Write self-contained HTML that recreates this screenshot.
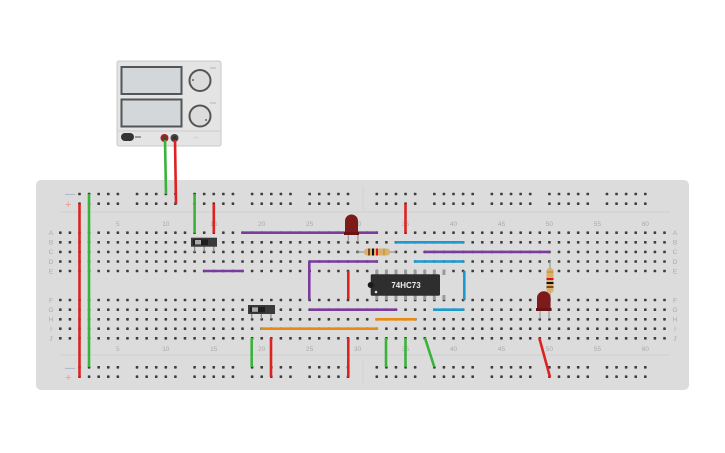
<!DOCTYPE html>
<html><head><meta charset="utf-8"><style>
html,body{margin:0;padding:0;background:#fff;width:725px;height:453px;overflow:hidden}
svg{display:block}
text{font-family:"Liberation Sans",sans-serif}
</style></head><body>
<svg id="s" width="725" height="453" viewBox="0 0 725 453" xmlns="http://www.w3.org/2000/svg">
<!-- power supply -->
<rect x="117" y="61" width="104" height="85" rx="2" fill="#e4e4e4" stroke="#c8c8c8"/>
<rect x="121.5" y="67" width="60" height="27" fill="#d3d7d9" stroke="#555" stroke-width="2"/>
<rect x="121.5" y="99.5" width="60" height="27" fill="#d3d7d9" stroke="#555" stroke-width="2"/>
<circle cx="200" cy="80.5" r="10.5" fill="#dcdcdc" stroke="#555" stroke-width="2"/>
<circle cx="200" cy="116" r="10.5" fill="#dcdcdc" stroke="#555" stroke-width="2"/>
<circle cx="193" cy="80" r="0.9" fill="#444"/><circle cx="206" cy="120" r="0.9" fill="#444"/>
<text x="210" y="69" font-size="3" fill="#999">0.5C</text><text x="210" y="104" font-size="3" fill="#999">0.5C</text>
<line x1="117" y1="131" x2="221" y2="131" stroke="#ccc"/>
<rect x="121" y="133" width="13" height="8" rx="4" fill="#333"/>
<rect x="135" y="136" width="6" height="2" fill="#999"/>
<circle cx="164.5" cy="138" r="4" fill="#b01c1c"/><circle cx="164.5" cy="138" r="2" fill="#444"/>
<circle cx="174.5" cy="138" r="4" fill="#444"/><circle cx="174.5" cy="138" r="2" fill="#333"/>
<text x="194" y="139" font-size="4" fill="#ccc">Pb</text>
<!-- board -->
<rect x="36" y="180" width="653" height="210" rx="5" fill="#dcdcdc"/>
<line x1="60" y1="212" x2="670" y2="212" stroke="#d0d0d0"/>
<line x1="60" y1="355" x2="670" y2="355" stroke="#d0d0d0"/>
<line x1="363" y1="186" x2="363" y2="210" stroke="#d2d2d2"/>
<line x1="363" y1="359" x2="363" y2="384" stroke="#d2d2d2"/>
<text x="65" y="197" font-size="10" fill="#9ab">—</text>
<text x="65" y="208" font-size="11" fill="#e99">+</text>
<text x="65" y="371" font-size="10" fill="#9ab">—</text>
<text x="65" y="381" font-size="11" fill="#e99">+</text>
<g id="holes" fill="#3c3c3c"></g>
<g id="labels" font-size="6.5" fill="#aaa"></g>
<!-- wires -->
<g stroke-width="2.6" stroke-linecap="butt" fill="none">
<line x1="165" y1="140" x2="166" y2="194" stroke="#3bb33b"/>
<line x1="175" y1="140" x2="176" y2="204" stroke="#dd2222"/>
<line x1="79.5" y1="204" x2="79.5" y2="377" stroke="#dd2222"/>
<line x1="89" y1="194" x2="89" y2="367" stroke="#3bb33b"/>
<line x1="194.6" y1="194" x2="194.6" y2="233" stroke="#3bb33b"/>
<line x1="213.8" y1="204" x2="213.8" y2="233" stroke="#dd2222"/>
<line x1="242" y1="232.7" x2="378" y2="232.7" stroke="#7b3a9e"/>
<line x1="203.3" y1="271" x2="243.3" y2="271" stroke="#7b3a9e"/>
<line x1="309.3" y1="261.5" x2="309.3" y2="300" stroke="#7b3a9e"/>
<line x1="309.3" y1="261.5" x2="378" y2="261.5" stroke="#7b3a9e"/>
<line x1="309.3" y1="309.7" x2="397" y2="309.7" stroke="#7b3a9e"/>
<line x1="261" y1="328.7" x2="378" y2="328.7" stroke="#e88a10"/>
<line x1="375.7" y1="319.3" x2="416" y2="319.3" stroke="#e88a10"/>
<line x1="251.7" y1="338" x2="251.7" y2="367" stroke="#3bb33b"/>
<line x1="271" y1="338" x2="271" y2="377" stroke="#dd2222"/>
<line x1="348.3" y1="271" x2="348.3" y2="299" stroke="#dd2222"/>
<line x1="348.3" y1="338" x2="348.3" y2="377" stroke="#dd2222"/>
<line x1="405.5" y1="204" x2="405.5" y2="233" stroke="#dd2222"/>
<line x1="395.3" y1="242.3" x2="464.3" y2="242.3" stroke="#1a9ad0"/>
<line x1="424" y1="251.9" x2="550" y2="251.9" stroke="#7b3a9e"/>
<line x1="414" y1="261.5" x2="464.3" y2="261.5" stroke="#1a9ad0"/>
<line x1="464.3" y1="271" x2="464.3" y2="300" stroke="#1a9ad0"/>
<line x1="433" y1="309.7" x2="464.3" y2="309.7" stroke="#1a9ad0"/>
<line x1="386" y1="338" x2="386" y2="367" stroke="#3bb33b"/>
<line x1="405.5" y1="338" x2="405.5" y2="367" stroke="#3bb33b"/>
<line x1="425" y1="338" x2="434.3" y2="367" stroke="#3bb33b"/>
<line x1="539.3" y1="338" x2="550" y2="377" stroke="#dd2222"/>
</g>
<!-- switches -->
<g stroke="#888" stroke-width="1.2">
<line x1="194.6" y1="246" x2="194.6" y2="252"/><line x1="204.2" y1="246" x2="204.2" y2="252"/><line x1="213.8" y1="246" x2="213.8" y2="252"/>
<line x1="251.7" y1="313" x2="251.7" y2="319"/><line x1="261.3" y1="313" x2="261.3" y2="319"/><line x1="270.9" y1="313" x2="270.9" y2="319"/>
</g>
<rect x="191" y="237.7" width="26" height="9" fill="#3a3a3a"/><rect x="193" y="239.5" width="15" height="5.5" fill="#1e1e1e"/><rect x="195" y="240" width="6" height="4.5" fill="#aaa"/>
<rect x="248" y="305" width="27" height="9" fill="#3a3a3a"/><rect x="250" y="306.8" width="15" height="5.5" fill="#1e1e1e"/><rect x="252" y="307.3" width="6" height="4.5" fill="#aaa"/>
<!-- LED1 -->
<g stroke="#999" stroke-width="1.2"><line x1="348.3" y1="233" x2="348.3" y2="242"/><line x1="357.9" y1="233" x2="357.9" y2="242"/></g>
<path d="M345 235 V221 a6.5 6.5 0 0 1 13 0 V235 Z" fill="#7d1a1a"/><rect x="344" y="232" width="15" height="3" fill="#6a1515"/>
<!-- resistor1 -->
<line x1="357" y1="252" x2="396" y2="252" stroke="#999" stroke-width="1.2"/>
<rect x="364" y="248.5" width="26" height="7" rx="3" fill="#d8b070"/>
<rect x="368" y="248.5" width="2" height="7" fill="#7a4a1a"/><rect x="372" y="248.5" width="2" height="7" fill="#111"/><rect x="376" y="248.5" width="2" height="7" fill="#e01010"/><rect x="383" y="248.5" width="2" height="7" fill="#c9a040"/>
<!-- IC -->
<g id="pins" fill="#999"></g>
<rect x="370.7" y="274.3" width="69.3" height="21.4" rx="1.5" fill="#2e2e2e"/>
<circle cx="370.7" cy="285" r="3" fill="#1a1a1a"/>
<circle cx="376" cy="292" r="1.3" fill="#ddd"/>
<text x="406" y="288" font-size="8" font-family="Liberation Mono,monospace" fill="#eee" text-anchor="middle" font-weight="bold">74HC73</text>
<!-- resistor2 -->
<line x1="550" y1="261" x2="550" y2="300" stroke="#999" stroke-width="1.2"/>
<rect x="546.5" y="268" width="7" height="25" rx="3" fill="#d8b070"/>
<rect x="546.5" y="271" width="7" height="2" fill="#c9a040"/><rect x="546.5" y="278" width="7" height="2" fill="#e01010"/><rect x="546.5" y="282" width="7" height="2" fill="#111"/><rect x="546.5" y="286" width="7" height="2" fill="#7a4a1a"/>
<!-- LED2 -->
<g stroke="#999" stroke-width="1.2"><line x1="540" y1="310" x2="540" y2="319"/><line x1="549" y1="310" x2="549" y2="319"/></g>
<path d="M537 311 V298 a6.8 6.8 0 0 1 13.6 0 V311 Z" fill="#7d1a1a"/><rect x="536" y="308" width="15.6" height="3" fill="#6a1515"/>
</svg>
<script>
var NS="http://www.w3.org/2000/svg",h=document.getElementById("holes"),L=document.getElementById("labels"),P=document.getElementById("pins");
function X(c){return 79.5+(c-1)*9.59}
function dot(x,y){var r=document.createElementNS(NS,"rect");r.setAttribute("x",x-1.3);r.setAttribute("y",y-1.3);r.setAttribute("width",2.6);r.setAttribute("height",2.6);r.setAttribute("rx",0.6);h.appendChild(r)}
var rows=[232.7,242.3,251.9,261.5,271,300,309.7,319.3,328.7,338.3];
for(var c=-1;c<=62;c++)for(var i=0;i<10;i++)dot(X(c),rows[i]);
var groups=[1,7,13,19,25,32,38,44,50,56];
groups.forEach(function(g){for(var k=0;k<5;k++){[194,203.7,367.3,376.7].forEach(function(y){dot(X(g+k),y)})}});
function t(x,y,s,a){var e=document.createElementNS(NS,"text");e.setAttribute("x",x);e.setAttribute("y",y);e.setAttribute("text-anchor",a||"middle");e.textContent=s;L.appendChild(e)}
for(var n=5;n<=60;n+=5){t(X(n),226,n);t(X(n),351,n)}
var let="ABCDEFGHIJ";for(var i=0;i<10;i++){t(51,rows[i]+2.3,let[i]);t(675,rows[i]+2.3,let[i])}
for(var c=32;c<=39;c++){var x=X(c);[[270,5],[295,5]].forEach(function(p){var r=document.createElementNS(NS,"rect");r.setAttribute("x",x-1.5);r.setAttribute("y",p[0]);r.setAttribute("width",3);r.setAttribute("height",p[1]);P.appendChild(r)})}
</script>
</body></html>
